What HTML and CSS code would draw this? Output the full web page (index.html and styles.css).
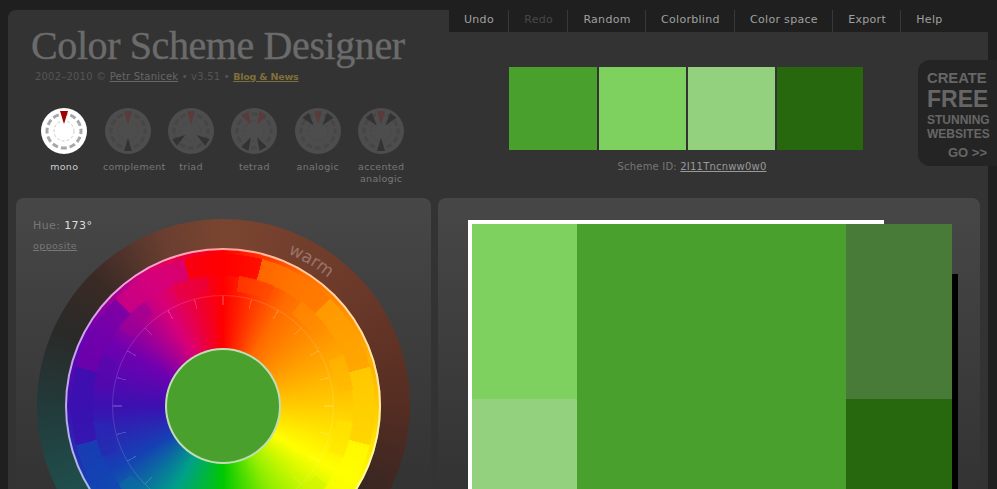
FILE: index.html
```html
<!DOCTYPE html>
<html lang="en">
<head>
    <meta charset="UTF-8">
    <title>Color Scheme Designer</title>
    <link rel="stylesheet" href="styles.css">
</head>
<body>
    <div class="page">
        <div class="top">
            <div class="brand">
                <h1>Color Scheme Designer</h1>
                <p class="credits">2002–2010 © <a href="#">Petr Stanicek</a> • v3.51 • <a class="blog" href="#">Blog &amp; News</a></p>
                <div class="schemes">
                    <div class="scheme active">
                        <svg class="dial" viewBox="0 0 46 46">
                            <circle class="disc" cx="23" cy="23" r="23"/>
                            <circle class="dash" cx="23" cy="23" r="17"/>
                            <circle class="dots" cx="23" cy="23" r="10"/>
                            <path class="key" d="M19 3H27L23 16Z"/>
                        </svg>
                        <span>mono</span>
                    </div>
                    <div class="scheme wide">
                        <svg class="dial" viewBox="0 0 46 46">
                            <circle class="disc" cx="23" cy="23" r="23"/>
                            <circle class="dash" cx="23" cy="23" r="17"/>
                            <circle class="dots" cx="23" cy="23" r="10"/>
                            <path class="key" d="M19 3H27L23 16Z"/>
                            <path class="other" d="M19 3H27L23 16Z" transform="rotate(180 23 23)"/>
                        </svg>
                        <span>complement</span>
                    </div>
                    <div class="scheme">
                        <svg class="dial" viewBox="0 0 46 46">
                            <circle class="disc" cx="23" cy="23" r="23"/>
                            <circle class="dash" cx="23" cy="23" r="17"/>
                            <circle class="dots" cx="23" cy="23" r="10"/>
                            <path class="key" d="M19 3H27L23 16Z"/>
                            <path class="other" d="M19 3H27L23 16Z" transform="rotate(125 23 23)"/>
                            <path class="other" d="M19 3H27L23 16Z" transform="rotate(-125 23 23)"/>
                        </svg>
                        <span>triad</span>
                    </div>
                    <div class="scheme">
                        <svg class="dial" viewBox="0 0 46 46">
                            <circle class="disc" cx="23" cy="23" r="23"/>
                            <circle class="dash" cx="23" cy="23" r="17"/>
                            <circle class="dots" cx="23" cy="23" r="10"/>
                            <path class="key" d="M19 3H27L23 16Z" transform="rotate(-27 23 23)"/>
                            <path class="key" d="M19 3H27L23 16Z" transform="rotate(27 23 23)"/>
                            <path class="other" d="M19 3H27L23 16Z" transform="rotate(153 23 23)"/>
                            <path class="other" d="M19 3H27L23 16Z" transform="rotate(-153 23 23)"/>
                        </svg>
                        <span>tetrad</span>
                    </div>
                    <div class="scheme">
                        <svg class="dial" viewBox="0 0 46 46">
                            <circle class="disc" cx="23" cy="23" r="23"/>
                            <circle class="dash" cx="23" cy="23" r="17"/>
                            <circle class="dots" cx="23" cy="23" r="10"/>
                            <path class="key" d="M19 3H27L23 16Z"/>
                            <path class="other" d="M19 3H27L23 16Z" transform="rotate(38 23 23)"/>
                            <path class="other" d="M19 3H27L23 16Z" transform="rotate(-38 23 23)"/>
                        </svg>
                        <span>analogic</span>
                    </div>
                    <div class="scheme">
                        <svg class="dial" viewBox="0 0 46 46">
                            <circle class="disc" cx="23" cy="23" r="23"/>
                            <circle class="dash" cx="23" cy="23" r="17"/>
                            <circle class="dots" cx="23" cy="23" r="10"/>
                            <path class="key" d="M19 3H27L23 16Z"/>
                            <path class="other" d="M19 3H27L23 16Z" transform="rotate(38 23 23)"/>
                            <path class="other" d="M19 3H27L23 16Z" transform="rotate(-38 23 23)"/>
                            <path class="other" d="M19 3H27L23 16Z" transform="rotate(180 23 23)"/>
                        </svg>
                        <span>accented<br>analogic</span>
                    </div>
                </div>
            </div>
            <div class="side">
                <ul class="menu">
                    <li>Undo</li>
                    <li class="off">Redo</li>
                    <li>Random</li>
                    <li>Colorblind</li>
                    <li>Color space</li>
                    <li>Export</li>
                    <li>Help</li>
                </ul>
                <div class="swatches">
                    <div class="swatch c-main"></div>
                    <div class="swatch c-light"></div>
                    <div class="swatch c-pale"></div>
                    <div class="swatch c-dark"></div>
                </div>
                <p class="scheme-id">Scheme ID: <a href="#">2I11Tncnww0w0</a></p>
            </div>
        </div>

        <div class="panels">
            <div class="panel wheel-panel">
                <div class="hue-info">
                    <p>Hue: <b>173°</b></p>
                    <a href="#">opposite</a>
                </div>
                <div class="wheel">
                    <div class="hue"></div>
                    <div class="blocks"></div>
                    <div class="teeth"></div>
                    <div class="ticks"></div>
                    <div class="tick-line"></div>
                    <div class="core"></div>
                    <svg class="wheel-label" viewBox="0 0 373 373">
                        <path id="warmArc" d="M186.5 21.5A165 165 0 0 1 351.5 186.5" fill="none"/>
                        <text><textPath href="#warmArc" startOffset="66">warm</textPath></text>
                    </svg>
                </div>
            </div>
            <div class="panel preview-panel">
                <div class="preview">
                    <div class="preview-grid">
                        <div class="c-light"></div>
                        <div class="c-main tall"></div>
                        <div class="c-muted"></div>
                        <div class="c-pale"></div>
                        <div class="c-dark"></div>
                    </div>
                    <div class="preview-shadow"></div>
                </div>
            </div>
        </div>
    </div>

    <div class="promo">
        <span class="p-create">CREATE</span>
        <span class="p-free">FREE</span>
        <span class="p-small">STUNNING</span>
        <span class="p-small">WEBSITES</span>
        <span class="p-go">GO &gt;&gt;</span>
    </div>
</body>
</html>
```

FILE: styles.css
```css
html, body {
    height: 489px;
    overflow: hidden;
}
body {
    margin: 0;
    background-color: #1f1f1f;
    font-family: "DejaVu Sans", sans-serif;
    color: #777;
    font-size: 10px;
}
a {
    color: inherit;
}
.page {
    margin: 10px 9px 0 8px;
    height: 600px;
    background-color: #333;
    border-radius: 8px 0 0 0;
}

/* header */
.top {
    display: flex;
    height: 188px;
}
.brand {
    width: 441px;
}
h1 {
    margin: 14px 0 0 23px;
    font-family: "Liberation Serif", serif;
    font-weight: normal;
    font-size: 40px;
    line-height: 44px;
    letter-spacing: -0.4px;
    -webkit-text-stroke: 0.4px #6b6b6b;
    color: #6b6b6b;
    white-space: nowrap;
}
.credits {
    margin: 2px 0 0 27px;
    font-size: 10px;
    line-height: 14px;
    letter-spacing: 0.2px;
    color: #555;
}
.credits a {
    color: #666;
}
.credits .blog {
    color: #7f6f3a;
    font-size: 9.5px;
    font-weight: bold;
    letter-spacing: -0.2px;
}
.schemes {
    display: flex;
    margin: 24px 0 0 24.5px;
}
.scheme {
    width: 63.4px;
    box-sizing: border-box;
    text-align: center;
    white-space: nowrap;
    line-height: 12px;
    font-size: 9.5px;
    letter-spacing: 0.3px;
}
.scheme.wide span {
    margin-left: 7px;
    width: 60px;
}
.scheme span {
    display: block;
    margin-top: 7px;
}
.scheme.active span {
    color: #ccc;
}
.dial {
    display: block;
    width: 46px;
    height: 46px;
    margin: 0 auto;
}
.disc {
    fill: #4d4d4d;
}
.dash {
    fill: none;
    stroke: #464646;
    stroke-width: 3;
    stroke-dasharray: 6 2.9;
    stroke-dashoffset: 3;
}
.dots {
    fill: none;
    stroke: #484848;
    stroke-width: 1;
    stroke-dasharray: 3 2;
}
.key {
    fill: #5a3a3a;
}
.other {
    fill: #333;
}
.active .disc {
    fill: #fff;
}
.active .dash {
    stroke: #a8a8a8;
}
.active .dots {
    stroke: #ccc;
}
.active .key {
    fill: #a00000;
}

.side {
    flex: 1;
}
.menu {
    display: flex;
    margin: 0;
    padding: 0;
    list-style: none;
    height: 22px;
    background-color: #1f1f1f;
    font-size: 11px;
    letter-spacing: 0.3px;
    line-height: 20px;
    color: #a0a0a0;
}
.menu li {
    padding: 0 14.3px 0 15px;
    border-right: 1px solid #383838;
}
.menu li:last-child {
    border-right: none;
}
.menu .off {
    color: #484848;
}
.swatches {
    display: flex;
    gap: 2px;
    margin: 35px 0 0 60px;
}
.swatch {
    width: 87px;
    height: 83px;
}
.swatch:first-child {
    width: 88px;
}
.swatch:last-child {
    width: 86px;
}
.scheme-id {
    margin: 10px 0 0 66px;
    width: 354px;
    text-align: center;
    line-height: 14px;
    letter-spacing: 0.2px;
}
.scheme-id a {
    color: #999;
}

.c-main { background-color: #4aa02c; }
.c-light { background-color: #7ed15f; }
.c-pale { background-color: #94d17e; }
.c-dark { background-color: #27670d; }
.c-muted { background-color: #487a38; }

/* panels */
.panels {
    display: flex;
    gap: 7px;
    padding: 0 8px;
}
.panel {
    position: relative;
    height: 400px;
    border-radius: 8px 8px 0 0;
    background: linear-gradient(#474747, #333 290px);
}
.wheel-panel {
    width: 415px;
}
.preview-panel {
    width: 542px;
}
.hue-info {
    position: absolute;
    left: 17px;
    top: 21px;
    z-index: 2;
    letter-spacing: 0.4px;
}
.hue-info p {
    margin: 0 0 7px;
    font-size: 11px;
    line-height: 14px;
}
.hue-info b {
    font-weight: normal;
    color: #ddd;
}
.hue-info a {
    font-size: 9.5px;
    letter-spacing: 0.4px;
}

/* color wheel */
.wheel {
    position: absolute;
    left: 20.5px;
    top: 21px;
    width: 373px;
    height: 373px;
    border-radius: 50%;
    background: conic-gradient(#7a4530 0deg, #6d3a2a 45deg, #552d22 90deg, #352522 125deg, #242424 160deg, #242424 200deg, #1f4f4d 240deg, #223a3a 270deg, #2a2a28 295deg, #3a2a25 315deg, #6a3e30 340deg, #7a4530 360deg);
}
.hue, .blocks, .teeth, .ticks {
    position: absolute;
    inset: 28.5px;
    border-radius: 50%;
}
.hue {
    background: conic-gradient(#f00 0deg, #ff6a00 30deg, #ff9c00 60deg, #ffcc00 90deg, #ff0 120deg, #90ee00 150deg, #00c800 180deg, #00a088 210deg, #1540b4 240deg, #3c10b0 270deg, #7000b0 300deg, #d80078 330deg, #f00 360deg);
    box-shadow: inset 0 0 0 2px rgba(255, 255, 255, 0.65);
}
.blocks {
    opacity: 0.7;
    background: conic-gradient(from -15deg,
        #f00 0 30deg, #ff7a00 0 60deg, #ffa200 0 90deg, #ffd000 0 120deg,
        #ff0 0 150deg, #9fee00 0 180deg, #00c000 0 210deg, #00a090 0 240deg,
        #1344b4 0 270deg, #3a10b0 0 300deg, #7200aa 0 330deg, #d4007f 0 360deg);
    -webkit-mask: radial-gradient(circle closest-side, transparent 130px, #000 130px, #000 152px, transparent 152px);
    mask: radial-gradient(circle closest-side, transparent 130px, #000 130px, #000 152px, transparent 152px);
}
.teeth {
    opacity: 0.55;
    background: conic-gradient(from 7deg,
        #ff4a00 0 16deg, transparent 0 30deg,
        #ff8e00 0 46deg, transparent 0 60deg,
        #ffb900 0 76deg, transparent 0 90deg,
        #ffe500 0 106deg, transparent 0 120deg,
        #d0f500 0 136deg, transparent 0 150deg,
        #50d800 0 166deg, transparent 0 180deg,
        #00b060 0 196deg, transparent 0 210deg,
        #0a70a0 0 226deg, transparent 0 240deg,
        #2828b4 0 256deg, transparent 0 270deg,
        #5608ad 0 286deg, transparent 0 300deg,
        #a00095 0 316deg, transparent 0 330deg,
        #ea0040 0 346deg, transparent 0 360deg);
    -webkit-mask: radial-gradient(circle closest-side, transparent 115px, #000 115px, #000 131px, transparent 131px);
    mask: radial-gradient(circle closest-side, transparent 115px, #000 115px, #000 131px, transparent 131px);
}
.ticks {
    background: repeating-conic-gradient(from -0.3deg, rgba(255, 255, 255, 0.18) 0 0.6deg, transparent 0 15deg);
    -webkit-mask: radial-gradient(circle closest-side, transparent 101px, #000 101px, #000 110px, transparent 110px);
    mask: radial-gradient(circle closest-side, transparent 101px, #000 101px, #000 110px, transparent 110px);
}
.tick-line {
    position: absolute;
    inset: 75.5px;
    border: 1px solid rgba(255, 255, 255, 0.15);
    border-radius: 50%;
}
.core {
    position: absolute;
    inset: 128.5px;
    background-color: #4aa02c;
    border: 2px solid rgba(255, 255, 255, 0.65);
    border-radius: 50%;
}
.wheel-label {
    position: absolute;
    inset: 0;
}
.wheel-label text {
    font-size: 17px;
    fill: #97736a;
}

/* big preview */
.preview {
    display: flex;
    width: 412px;
    height: 300px;
    margin: 22px 0 0 30px;
    border-top: 4px solid #fff;
    border-left: 4px solid #fff;
}
.preview-grid {
    flex: none;
    display: grid;
    grid-template-columns: 105px 269px 106px;
    grid-template-rows: 175px 1fr;
    width: 480px;
}
.preview-grid .tall {
    grid-row: span 2;
}
.preview-shadow {
    flex: none;
    width: 6px;
    margin-top: 50px;
    background-color: #000;
}

/* promo box on the right edge */
.promo {
    position: absolute;
    left: 918px;
    right: 0;
    top: 60px;
    height: 106px;
    box-sizing: border-box;
    padding: 10px 0 0 9px;
    background-color: #242424;
    border-radius: 12px 0 0 12px;
    font-family: "Liberation Sans", sans-serif;
    font-weight: bold;
    color: #666;
}
.promo span {
    display: block;
}
.p-create {
    font-size: 14.8px;
    line-height: 17px;
}
.p-free {
    font-size: 23px;
    line-height: 25px;
}
.p-small {
    font-size: 12px;
    line-height: 14px;
    position: relative;
    top: 1px;
}
.p-go {
    margin-top: 5px;
    padding-left: 21px;
    font-size: 13px;
    line-height: 16px;
}
```
